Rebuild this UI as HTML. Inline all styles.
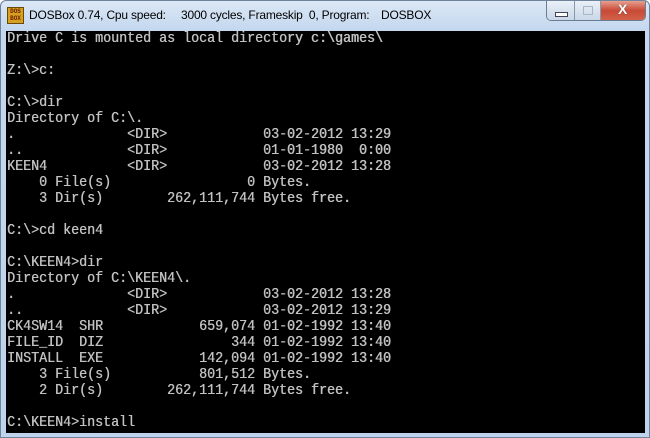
<!DOCTYPE html><html><head><style>
body{margin:0;width:650px;height:438px;overflow:hidden;background:#fff;font-family:"Liberation Sans",sans-serif}
.win{position:absolute;left:0;top:0;width:648px;height:436px;border:1px solid #6f839b;border-radius:6px 6px 0 0;background:linear-gradient(#dbe8f6,#c4d7ee 30px,#bed3ec);}
.t{position:absolute;top:7px;font-size:12px;color:#000;white-space:pre}
.ico{position:absolute;left:6px;top:6px;width:15px;height:15px;background:#d8a020;border:1px solid #6a4a00;font:bold 6px "Liberation Mono",monospace;color:#6a2000;line-height:7px;text-align:center}
.btns{position:absolute;left:545px;top:0;height:19px;width:98px;border:1px solid #6a7d94;border-top:none;border-radius:0 0 5px 5px;overflow:hidden;display:flex}
.b{height:19px;background:linear-gradient(#e9f0f8,#c9d7e7);border-right:1px solid #8798ad;position:relative}
.x{flex:1;background:linear-gradient(#e8a090,#c84a36 50%,#d2614a);border:none}
.screen{position:absolute;left:5px;top:30px;width:639px;height:402px;background:#000}
.in{position:absolute;left:0;top:1px}
.l{position:absolute;left:1px;height:16px;font:13.33px "Liberation Mono",monospace;color:#c0c0c0;white-space:pre;transform:scaleY(1.12);transform-origin:0 50%;line-height:16px;text-shadow:0.4px 0 0 #c0c0c0}
</style></head><body>
<div class="win">
<div class="ico">DOS<br>BOX</div>
<div class="t" style="left:28px;letter-spacing:-0.2px">DOSBox 0.74, Cpu speed:</div>
<div class="t" style="left:180px;letter-spacing:-0.2px">3000 cycles, Frameskip  0, Program:</div>
<div class="t" style="left:380px;letter-spacing:-0.2px">DOSBOX</div>
<div class="btns"><div class="b" style="width:27px"><div style="position:absolute;left:8px;top:11px;width:11px;height:3px;background:#fff;border:1px solid #445"></div></div><div class="b" style="width:25px"><div style="position:absolute;left:8px;top:5px;width:8px;height:7px;border:1px solid #a8b6c8"></div></div><div class="b x"><div style="position:absolute;left:17px;top:0;color:#fff;font:bold 14px 'Liberation Sans';text-shadow:0 0 1px #333">X</div></div></div>
<div class="screen"><div class="in">
<div class="l" style="top:0">Drive C is mounted as local directory c:\games\</div>
<div class="l" style="top:32px">Z:\&gt;c:</div>
<div class="l" style="top:64px">C:\&gt;dir</div>
<div class="l" style="top:80px">Directory of C:\.</div>
<div class="l" style="top:96px">.              &lt;DIR&gt;            03-02-2012 13:29</div>
<div class="l" style="top:112px">..             &lt;DIR&gt;            01-01-1980  0:00</div>
<div class="l" style="top:128px">KEEN4          &lt;DIR&gt;            03-02-2012 13:28</div>
<div class="l" style="top:144px">    0 File(s)                 0 Bytes.</div>
<div class="l" style="top:160px">    3 Dir(s)        262,111,744 Bytes free.</div>
<div class="l" style="top:192px">C:\&gt;cd keen4</div>
<div class="l" style="top:224px">C:\KEEN4&gt;dir</div>
<div class="l" style="top:240px">Directory of C:\KEEN4\.</div>
<div class="l" style="top:256px">.              &lt;DIR&gt;            03-02-2012 13:28</div>
<div class="l" style="top:272px">..             &lt;DIR&gt;            03-02-2012 13:29</div>
<div class="l" style="top:288px">CK4SW14  SHR            659,074 01-02-1992 13:40</div>
<div class="l" style="top:304px">FILE_ID  DIZ                344 01-02-1992 13:40</div>
<div class="l" style="top:320px">INSTALL  EXE            142,094 01-02-1992 13:40</div>
<div class="l" style="top:336px">    3 File(s)           801,512 Bytes.</div>
<div class="l" style="top:352px">    2 Dir(s)        262,111,744 Bytes free.</div>
<div class="l" style="top:384px">C:\KEEN4&gt;install</div>
</div></div></div>
</body></html>
